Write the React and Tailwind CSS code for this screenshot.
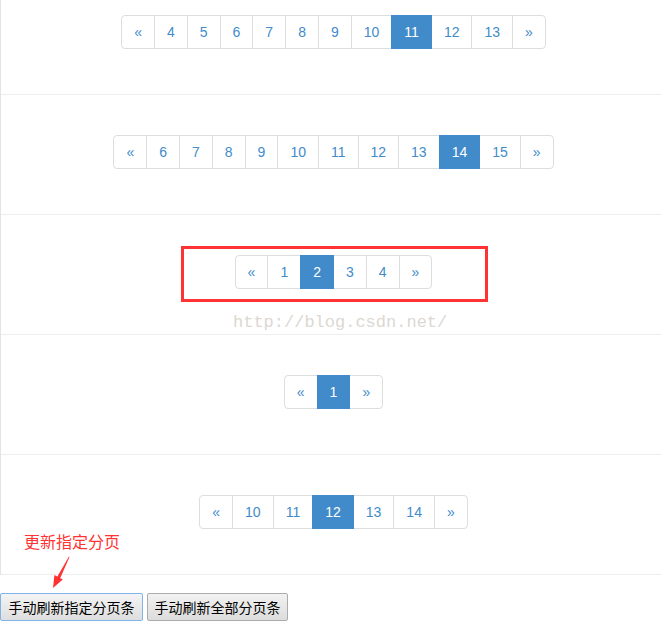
import React from "react";

const pagers = [
  { pages: [4, 5, 6, 7, 8, 9, 10, 11, 12, 13], active: 11 },
  { pages: [6, 7, 8, 9, 10, 11, 12, 13, 14, 15], active: 14 },
  { pages: [1, 2, 3, 4], active: 2 },
  { pages: [1], active: 1 },
  { pages: [10, 11, 12, 13, 14], active: 12 },
];

function PageLink({ label, active, first, last }) {
  let cls =
    "block -ml-px border px-3 py-1.5 text-sm leading-5 cursor-pointer ";
  if (first) cls += "ml-0 rounded-l-[4px] ";
  if (last) cls += "rounded-r-[4px] ";
  cls += active
    ? "relative z-[2] bg-[#428bca] border-[#428bca] text-white"
    : "bg-white border-[#ddd] text-[#428bca]";
  return (
    <li>
      <a className={cls}>{label}</a>
    </li>
  );
}

function Pager({ pages, active }) {
  return (
    <ul className="flex">
      <PageLink label="«" first />
      {pages.map((p) => (
        <PageLink key={p} label={p} active={p === active} />
      ))}
      <PageLink label="»" last />
    </ul>
  );
}

export default function App() {
  return (
    <div
      className="relative w-[661px] h-[631px] overflow-hidden bg-white"
      style={{ fontFamily: '"Liberation Sans", Arial, sans-serif' }}
    >
      <div className="border-l border-[#e3e3e3]">
        {pagers.map((pg, i) => (
          <div
            key={i}
            className={
              "flex justify-center pl-[5px] pb-[45px] border-b border-[#eee] " +
              (i === 0 ? "pt-[15px]" : "pt-[40px]")
            }
          >
            <Pager pages={pg.pages} active={pg.active} />
          </div>
        ))}
      </div>

      <div
        className="flex gap-[4px] pt-[18px]"
        style={{ fontFamily: '"Noto Sans CJK SC", "Microsoft YaHei", sans-serif' }}
      >
        <button className="w-[143px] h-[28px] border border-[#7eb4ea] rounded-[2px] bg-gradient-to-b from-[#f4f4f4] to-[#dedede] text-[14px] text-black leading-none">
          手动刷新指定分页条
        </button>
        <button className="w-[141px] h-[28px] border border-[#acacac] rounded-[2px] bg-gradient-to-b from-[#f2f2f2] to-[#dcdcdc] text-[14px] text-black leading-none">
          手动刷新全部分页条
        </button>
      </div>

      {/* red highlight around the third pager */}
      <div className="absolute left-[181px] top-[246px] w-[307px] h-[56px] border-[3px] border-[#ff3333]" />

      <div
        className="absolute left-[233px] top-[313px] text-[17px] leading-5 text-[#dcd8d2]"
        style={{ fontFamily: '"Liberation Mono", "DejaVu Sans Mono", monospace' }}
      >
        http://blog.csdn.net/
      </div>

      <div
        className="absolute left-[24px] top-[531px] text-[16px] leading-5 text-[#ff3333]"
        style={{ fontFamily: '"Noto Sans CJK SC", sans-serif' }}
      >
        更新指定分页
      </div>

      {/* annotation arrow */}
      <svg
        className="absolute left-[45px] top-[552px]"
        width="30"
        height="40"
        viewBox="0 0 30 40"
      >
        <polygon points="24.5,5 23.8,4.8 11.8,25.6 15.0,26.4" fill="#ff3333" />
        <polygon points="8,36 17.8,27.6 9.4,23.0" fill="#ff3333" />
      </svg>
    </div>
  );
}
